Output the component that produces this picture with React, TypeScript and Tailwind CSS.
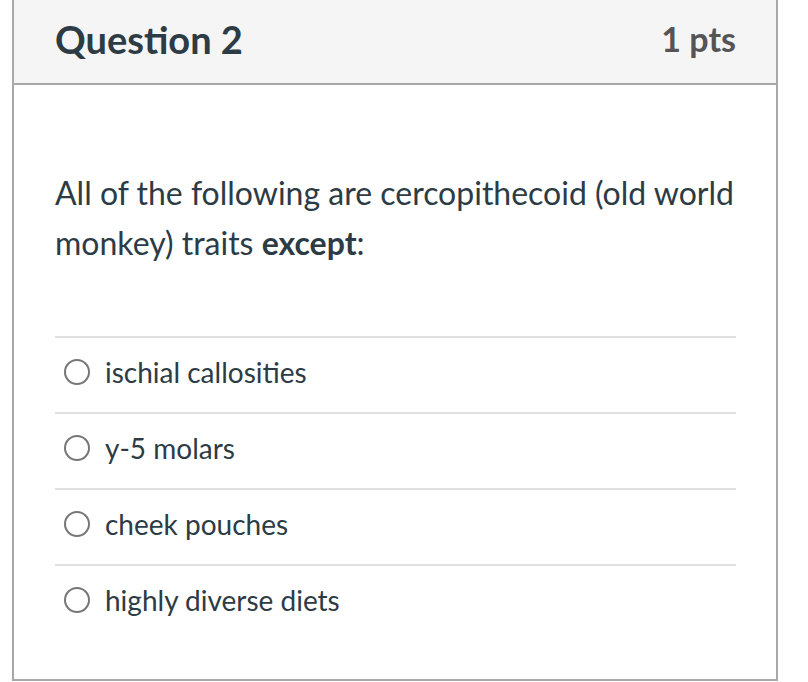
import React from "react";

const answers = [
  "ischial callosities",
  "y-5 molars",
  "cheek pouches",
  "highly diverse diets",
];

export default function App() {
  return (
    <div className="bg-white w-[808px] h-[682px] font-['Lato','Liberation_Sans',sans-serif] text-[#2d3b45]">
      <div className="ml-[12px] w-[766px] h-[681px] border-x-2 border-b-2 border-[#a8a8a8] flex flex-col">
        {/* header */}
        <div className="h-[85px] bg-[#f5f5f5] border-b-2 border-[#a8a8a8] flex items-center justify-between pl-[41px] pr-[40px] pb-[5px]">
          <h2 className="text-[38px] font-bold leading-none">Question 2</h2>
          <div className="text-[34px] font-bold leading-none text-[#555555]">1 pts</div>
        </div>

        <div className="pl-[41px] pr-[40px] pt-[83px]">
          <p className="text-[32px] leading-[50px]">
            All of the following are cercopithecoid (old world monkey) traits{" "}
            <strong className="font-bold">except</strong>:
          </p>

          <div className="mt-[68px]">
            {answers.map((a) => (
              <label
                key={a}
                className="h-[76px] border-t-2 border-[#e0e0e0] flex items-center pb-[6px]"
              >
                <span className="ml-[9px] w-[26px] h-[26px] rounded-full border-2 border-[#767676] bg-white" />
                <span className="ml-[15px] text-[28px] leading-none">{a}</span>
              </label>
            ))}
          </div>
        </div>
      </div>
    </div>
  );
}
